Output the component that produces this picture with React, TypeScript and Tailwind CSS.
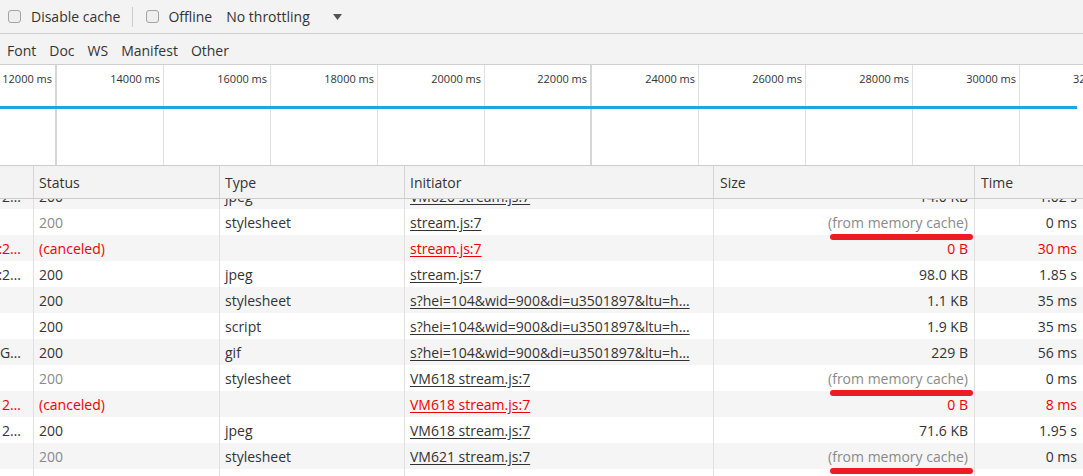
import React from 'react';

type Row = {
    name: string;
    status: string;
    type: string;
    initiator: string;
    size: string;
    time: string;
    cached?: boolean;
    canceled?: boolean;
    marked?: boolean;
};

const rows: Row[] = [
    { name: 'jpg?t=2…', status: '200', type: 'jpeg', initiator: 'VM620 stream.js:7', size: '14.0 KB', time: '1.02 s' },
    { name: '', status: '200', type: 'stylesheet', initiator: 'stream.js:7', size: '(from memory cache)', time: '0 ms', cached: true, marked: true },
    { name: 'e:2…', status: '(canceled)', type: '', initiator: 'stream.js:7', size: '0 B', time: '30 ms', canceled: true },
    { name: 'x:2…', status: '200', type: 'jpeg', initiator: 'stream.js:7', size: '98.0 KB', time: '1.85 s' },
    { name: '', status: '200', type: 'stylesheet', initiator: 's?hei=104&wid=900&di=u3501897&ltu=h…', size: '1.1 KB', time: '35 ms' },
    { name: '', status: '200', type: 'script', initiator: 's?hei=104&wid=900&di=u3501897&ltu=h…', size: '1.9 KB', time: '35 ms' },
    { name: 'G…', status: '200', type: 'gif', initiator: 's?hei=104&wid=900&di=u3501897&ltu=h…', size: '229 B', time: '56 ms' },
    { name: '', status: '200', type: 'stylesheet', initiator: 'VM618 stream.js:7', size: '(from memory cache)', time: '0 ms', cached: true, marked: true },
    { name: '2…', status: '(canceled)', type: '', initiator: 'VM618 stream.js:7', size: '0 B', time: '8 ms', canceled: true },
    { name: '2…', status: '200', type: 'jpeg', initiator: 'VM618 stream.js:7', size: '71.6 KB', time: '1.95 s' },
    { name: '', status: '200', type: 'stylesheet', initiator: 'VM621 stream.js:7', size: '(from memory cache)', time: '0 ms', cached: true, marked: true },
];

const ticks = ['14000 ms', '16000 ms', '18000 ms', '20000 ms', '22000 ms', '24000 ms', '26000 ms', '28000 ms', '30000 ms'];

function Checkbox() {
    return <div className="w-[13px] h-[13px] rounded-[3px] border border-[#a3a3a3] bg-[#eeeeee] shrink-0" />;
}

export default function App() {
    return (
        <div className="w-[1083px] h-[476px] overflow-hidden bg-white flex flex-col font-['Open_Sans',sans-serif] text-[14px] text-[#333]">
            {/* top toolbar */}
            <div className="h-[34px] shrink-0 bg-[#f3f3f3] border-b border-[#cfcfcf] flex items-center">
                <div className="ml-[8px]"><Checkbox /></div>
                <span className="ml-[10px]">Disable cache</span>
                <div className="ml-[12px] w-px h-[20px] bg-[#cccccc]" />
                <div className="ml-[13px]"><Checkbox /></div>
                <span className="ml-[9px]">Offline</span>
                <span className="ml-[14px]">No throttling</span>
                <svg className="ml-[23px]" width="9" height="6" viewBox="0 0 9 6">
                    <polygon points="0,0 9,0 4.5,6" fill="#555" />
                </svg>
            </div>

            {/* filter bar */}
            <div className="h-[31px] shrink-0 bg-[#f3f3f3] border-b border-[#cfcfcf] flex items-center gap-[13px] pl-[7px] pt-[2px]">
                <span>Font</span>
                <span>Doc</span>
                <span>WS</span>
                <span>Manifest</span>
                <span>Other</span>
            </div>

            {/* overview timeline */}
            <div className="relative h-[100px] shrink-0 flex">
                <div className="w-[57px] shrink-0 border-r-2 border-[#d6d6d6] pt-[7px] pr-[3px] text-right text-[11px] leading-[14px] whitespace-nowrap">12000 ms</div>
                {ticks.map((t, i) => (
                    <div
                        key={t}
                        className={
                            i === 4
                                ? 'w-[107px] shrink-0 border-r-2 border-[#d6d6d6] pt-[7px] pr-[3px] text-right text-[11px] leading-[14px] whitespace-nowrap'
                                : 'w-[107px] shrink-0 border-r border-[#e0e0e0] pt-[7px] pr-[3px] text-right text-[11px] leading-[14px] whitespace-nowrap'
                        }
                    >
                        {t}
                    </div>
                ))}
                <div className="flex-1 pt-[7px] pl-[53px] text-[11px] leading-[14px] whitespace-nowrap overflow-hidden">32000 ms</div>
                <div className="absolute left-0 top-[41px] w-[1077px] h-[3px] bg-[#1fa5e6]" />
            </div>

            {/* table header */}
            <div className="h-[34px] shrink-0 bg-[#f3f3f3] border-t border-b border-[#cccccc] flex">
                <div className="w-[34px] shrink-0 border-r border-[#d4d4d4]" />
                <div className="w-[186px] shrink-0 border-r border-[#d4d4d4] pl-[5px] flex items-center">Status</div>
                <div className="w-[185px] shrink-0 border-r border-[#d4d4d4] pl-[5px] flex items-center">Type</div>
                <div className="w-[309px] shrink-0 border-r border-[#d4d4d4] pl-[5px] flex items-center">Initiator</div>
                <div className="w-[261px] shrink-0 border-r border-[#d4d4d4] pl-[6px] flex items-center">Size</div>
                <div className="flex-1 pl-[6px] flex items-center">Time</div>
            </div>

            {/* table body */}
            <div className="flex-1 overflow-hidden">
                {rows.map((r, i) => {
                    const red = r.canceled ? 'text-[#ee0000]' : '';
                    return (
                        <div
                            key={i}
                            className={
                                (i % 2 === 0 ? 'bg-[#f5f5f5] ' : 'bg-white ') +
                                (i === 0 ? '-mt-[16px] ' : '') +
                                'h-[26px] flex'
                            }
                        >
                            <div className={'w-[34px] shrink-0 border-r border-[#e0e0e0] overflow-hidden flex justify-end items-center pr-[12px] ' + red}>
                                <span className="shrink-0 whitespace-nowrap">{r.name}</span>
                            </div>
                            <div
                                className={
                                    'w-[186px] shrink-0 border-r border-[#e0e0e0] pl-[5px] flex items-center ' +
                                    (r.canceled ? 'text-[#ee0000]' : r.cached ? 'text-[#8a8a8a]' : '')
                                }
                            >
                                {r.status}
                            </div>
                            <div className="w-[185px] shrink-0 border-r border-[#e0e0e0] pl-[5px] flex items-center">{r.type}</div>
                            <div className={'w-[309px] shrink-0 border-r border-[#e0e0e0] pl-[5px] flex items-center overflow-hidden ' + red}>
                                <span className="underline underline-offset-2 whitespace-nowrap">{r.initiator}</span>
                            </div>
                            <div
                                className={
                                    'relative w-[261px] shrink-0 border-r border-[#e0e0e0] pr-[6px] flex items-center justify-end ' +
                                    (r.canceled ? 'text-[#ee0000]' : r.cached ? 'text-[#8a8a8a]' : '')
                                }
                            >
                                {r.size}
                                {r.marked && (
                                    <div className="absolute left-[116px] bottom-[-5px] w-[143px] h-[6px] rounded-full bg-[#ed1c24]" />
                                )}
                            </div>
                            <div className={'flex-1 pr-[6px] flex items-center justify-end ' + red}>{r.time}</div>
                        </div>
                    );
                })}
                <div className="h-[26px] flex">
                    <div className="w-[34px] shrink-0 border-r border-[#e0e0e0]" />
                    <div className="w-[186px] shrink-0 border-r border-[#e0e0e0]" />
                    <div className="w-[185px] shrink-0 border-r border-[#e0e0e0]" />
                    <div className="w-[309px] shrink-0 border-r border-[#e0e0e0]" />
                    <div className="w-[261px] shrink-0 border-r border-[#e0e0e0]" />
                    <div className="flex-1" />
                </div>
            </div>
        </div>
    );
}
